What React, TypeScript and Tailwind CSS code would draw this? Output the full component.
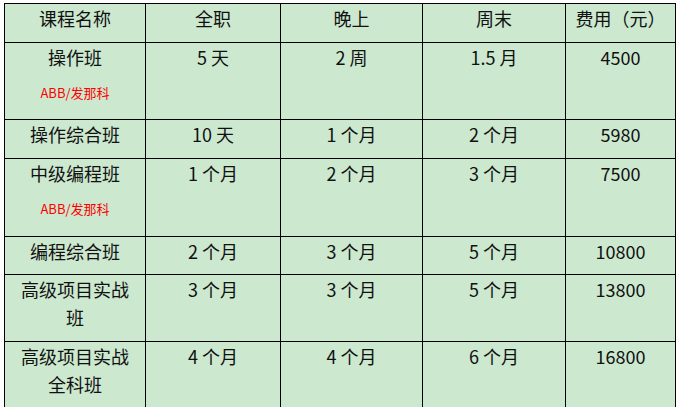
import React from "react";

type Row = {
  name: string[];
  brand?: string;
  fullTime: string;
  evening: string;
  weekend: string;
  fee: string;
  height: string;
};

const rows: Row[] = [
  { name: ["操作班"], brand: "ABB/发那科", fullTime: "5 天", evening: "2 周", weekend: "1.5 月", fee: "4500", height: "h-[77px]" },
  { name: ["操作综合班"], fullTime: "10 天", evening: "1 个月", weekend: "2 个月", fee: "5980", height: "h-[39px]" },
  { name: ["中级编程班"], brand: "ABB/发那科", fullTime: "1 个月", evening: "2 个月", weekend: "3 个月", fee: "7500", height: "h-[78px]" },
  { name: ["编程综合班"], fullTime: "2 个月", evening: "3 个月", weekend: "5 个月", fee: "10800", height: "h-[38px]" },
  { name: ["高级项目实战", "班"], fullTime: "3 个月", evening: "3 个月", weekend: "5 个月", fee: "13800", height: "h-[67px]" },
  { name: ["高级项目实战", "全科班"], fullTime: "4 个月", evening: "4 个月", weekend: "6 个月", fee: "16800", height: "h-[80px]" },
];

const headers = ["课程名称", "全职", "晚上", "周末", "费用（元）"];
const widths = ["w-[141px]", "w-[135px]", "w-[142px]", "w-[143px]", "w-[110px]"];

const Cell = ({ w, children }: { w: string; children: React.ReactNode }) => (
  <div className={`${w} shrink-0 border-r border-b border-black text-center`}>{children}</div>
);

export default function App() {
  return (
    <div className="w-[678px] h-[407px] overflow-hidden bg-white pl-[4px] pt-[3px] font-['Noto_Sans_CJK_SC',sans-serif] text-[18px] leading-[28px] text-[#111]">
      <div className="w-max border-t border-l border-black bg-[#cce8cf]">
        {/* header */}
        <div className="flex h-[39px]">
          {headers.map((h, i) => (
            <Cell key={h} w={widths[i]}>
              {h}
            </Cell>
          ))}
        </div>

        {rows.map((r) => (
          <div key={r.fee} className={`flex ${r.height}`}>
            <Cell w={widths[0]}>
              {r.name.map((n) => (
                <div key={n}>{n}</div>
              ))}
              {r.brand && (
                <div className="mt-[12px] text-[13px] leading-[20px] text-[#ff0000]">{r.brand}</div>
              )}
            </Cell>
            <Cell w={widths[1]}>{r.fullTime}</Cell>
            <Cell w={widths[2]}>{r.evening}</Cell>
            <Cell w={widths[3]}>{r.weekend}</Cell>
            <Cell w={widths[4]}>{r.fee}</Cell>
          </div>
        ))}
      </div>
    </div>
  );
}
